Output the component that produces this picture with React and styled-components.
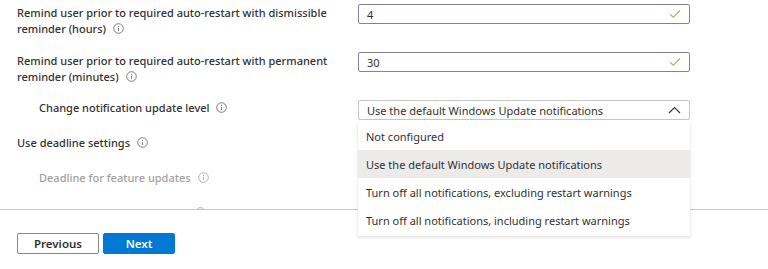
import React from "react";
import styled, { createGlobalStyle } from "styled-components";

const Global = createGlobalStyle`
  html, body { margin: 0; padding: 0; background: #fff; }
  body { font-family: "Segoe UI", "Noto Sans", "Open Sans", sans-serif; color: #323130; }
  * { box-sizing: border-box; }
`;

const Page = styled.div`
  width: 768px;
  height: 269px;
  position: relative;
  overflow: hidden;
  background: #fff;
`;

const FormArea = styled.div`
  height: 209px;
  padding: 4px 0 0 17px;
  display: flex;
  flex-direction: column;
  gap: 15px;
`;

const Row = styled.div`
  flex-shrink: 0;
  display: grid;
  grid-template-columns: 341px 332px;
  align-items: start;
  min-height: 20px;
  position: relative;
`;

const Label = styled.div`
  padding-left: ${(p) => (p.$indent ? "22px" : "0")};
  padding-top: ${(p) => (p.$single ? "0" : "1px")};
  font-size: 11px;
  line-height: 16px;
  font-weight: 500;
  color: ${(p) => (p.$disabled ? "#a19f9d" : "#323130")};
  padding-right: 6px;
`;

const Info = styled.span`
  display: inline-flex;
  vertical-align: -1px;
  margin-left: 7px;
  color: ${(p) => (p.$disabled ? "#a19f9d" : "#605e5c")};
`;

const InfoIcon = ({ disabled }) => (
  <Info $disabled={disabled}>
    <svg width="11" height="11" viewBox="0 0 11 11" fill="none">
      <circle cx="5.5" cy="5.5" r="4.8" stroke="currentColor" strokeWidth="0.8" />
      <circle cx="5.5" cy="3.3" r="0.55" fill="currentColor" />
      <path d="M5.5 4.8V8" stroke="currentColor" strokeWidth="0.8" />
    </svg>
  </Info>
);

const Field = styled.div`
  height: 20px;
  border: 1px solid ${(p) => p.$border || "#8a8886"};
  border-radius: 2px;
  display: flex;
  align-items: center;
  justify-content: space-between;
  padding: 0 8px 0 8px;
  font-size: 11px;
  font-weight: 400;
  color: #323130;
  background: #fff;
`;

const Check = () => (
  <svg width="12" height="10" viewBox="0 0 12 10" fill="none">
    <path d="M1 5.2L4.2 8.2L11 1.5" stroke="#8cbf6a" strokeWidth="1.1" />
  </svg>
);

const Chevron = () => (
  <svg width="13" height="8" viewBox="0 0 13 8" fill="none">
    <path d="M1 7L6.5 1.5L12 7" stroke="#323130" strokeWidth="1.1" />
  </svg>
);

const SelectWrap = styled.div`
  position: relative;
`;

const Menu = styled.div`
  position: absolute;
  top: 20px;
  left: 0;
  width: 332px;
  background: #fff;
  box-shadow: 0 1.6px 3.6px rgba(0, 0, 0, 0.13), 0 0.3px 0.9px rgba(0, 0, 0, 0.11);
  padding: 2px 0 2px;
  z-index: 5;
`;

const Option = styled.div`
  height: 28px;
  display: flex;
  align-items: center;
  padding: 0 8px;
  font-size: 11px;
  color: #323130;
  background: ${(p) => (p.$selected ? "#edebe9" : "#fff")};
`;

const Footer = styled.div`
  position: relative;
  z-index: 2;
  height: 60px;
  background: #fff;
  border-top: 1px solid #c8c6c4;
  display: flex;
  gap: 4px;
  padding: 23px 0 0 17px;
`;

const Button = styled.button`
  height: 21px;
  width: ${(p) => p.$w}px;
  border-radius: 2px;
  font-family: inherit;
  font-size: 11.5px;
  font-weight: 600;
  padding: 0;
  cursor: pointer;
  border: 1px solid ${(p) => (p.$primary ? "#0078d4" : "#8a8886")};
  background: ${(p) => (p.$primary ? "#0078d4" : "#fff")};
  color: ${(p) => (p.$primary ? "#fff" : "#323130")};
`;

const options = [
  "Not configured",
  "Use the default Windows Update notifications",
  "Turn off all notifications, excluding restart warnings",
  "Turn off all notifications, including restart warnings",
];

export default function App() {
  return (
    <Page>
      <Global />
      <FormArea>
        <Row>
          <Label>
            Remind user prior to required auto-restart with dismissible reminder (hours)
            <InfoIcon />
          </Label>
          <Field $border="#8a7f96">
            <span>4</span>
            <Check />
          </Field>
        </Row>
        <Row>
          <Label>
            Remind user prior to required auto-restart with permanent reminder (minutes)
            <InfoIcon />
          </Label>
          <Field $border="#8a7f96">
            <span>30</span>
            <Check />
          </Field>
        </Row>
        <Row>
          <Label $indent $single>
            Change notification update level
            <InfoIcon />
          </Label>
          <SelectWrap>
            <Field $border="#c8c6c4">
              <span>Use the default Windows Update notifications</span>
              <Chevron />
            </Field>
            <Menu>
              {options.map((o, i) => (
                <Option key={o} $selected={i === 1}>
                  {o}
                </Option>
              ))}
            </Menu>
          </SelectWrap>
        </Row>
        <Row>
          <Label $single>
            Use deadline settings
            <InfoIcon />
          </Label>
        </Row>
        <Row>
          <Label $indent $single $disabled>
            Deadline for feature updates
            <InfoIcon disabled />
          </Label>
        </Row>
        <Row>
          <Label $indent $single $disabled>
            Deadline for quality updates
            <InfoIcon disabled />
          </Label>
        </Row>
      </FormArea>
      <Footer>
        <Button $w={82}>Previous</Button>
        <Button $w={72} $primary>
          Next
        </Button>
      </Footer>
    </Page>
  );
}
